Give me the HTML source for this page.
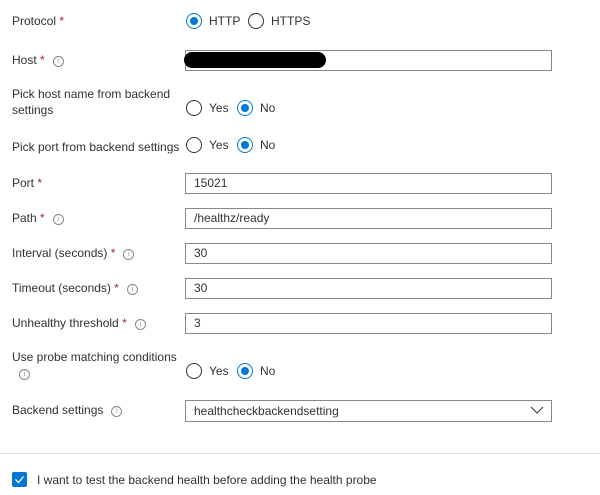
<!DOCTYPE html>
<html><head><style>
body{margin:0;width:600px;height:495px;background:#fff;font-family:"Liberation Sans",Arial,sans-serif;font-size:12px;color:#323130;position:relative;overflow:hidden}
.a{position:absolute}
.l{position:absolute;left:12px;line-height:16px}
.r{color:#a4262c}
.i{display:inline-block;width:9px;height:9px;border:1px solid #8a8886;border-radius:50%;font-size:7px;line-height:9px;text-align:center;color:#8a8886;margin-left:8px;vertical-align:1px}
.in{position:absolute;left:185px;width:365px;height:19px;border:1px solid #8a8886;line-height:19px;padding-left:8px;box-sizing:content-box}
.rb{position:absolute;width:14px;height:14px;border:1px solid #323130;border-radius:50%}
.rb.on{border-color:#0078d4}
.rb.on:after{content:"";position:absolute;left:3px;top:3px;width:8px;height:8px;border-radius:50%;background:#0078d4}
.t{position:absolute;line-height:16px}
</style></head><body>
<div class="l" style="top:13px">Protocol <span class="r">*</span></div>
<div class="rb on" style="left:186px;top:13px"></div><div class="t" style="left:209px;top:13px">HTTP</div>
<div class="rb" style="left:248px;top:13px"></div><div class="t" style="left:271px;top:13px">HTTPS</div>

<div class="l" style="top:52px">Host <span class="r">*</span><span class="i">i</span></div>
<div class="in" style="top:50px;width:357px"></div>
<div class="a" style="left:184px;top:52px;width:142px;height:16px;background:#000;border-radius:8px"></div>

<div class="l" style="top:86px">Pick host name from backend<br>settings</div>
<div class="rb" style="left:186px;top:100px"></div><div class="t" style="left:209px;top:100px">Yes</div>
<div class="rb on" style="left:237px;top:100px"></div><div class="t" style="left:260px;top:100px">No</div>

<div class="l" style="top:139px">Pick port from backend settings</div>
<div class="rb" style="left:186px;top:137px"></div><div class="t" style="left:209px;top:137px">Yes</div>
<div class="rb on" style="left:237px;top:137px"></div><div class="t" style="left:260px;top:137px">No</div>

<div class="l" style="top:175px">Port <span class="r">*</span></div>
<div class="in" style="top:173px;width:357px">15021</div>
<div class="l" style="top:210px">Path <span class="r">*</span><span class="i">i</span></div>
<div class="in" style="top:208px;width:357px">/healthz/ready</div>
<div class="l" style="top:245px">Interval (seconds) <span class="r">*</span><span class="i">i</span></div>
<div class="in" style="top:243px;width:357px">30</div>
<div class="l" style="top:280px">Timeout (seconds) <span class="r">*</span><span class="i">i</span></div>
<div class="in" style="top:278px;width:357px">30</div>
<div class="l" style="top:315px">Unhealthy threshold <span class="r">*</span><span class="i">i</span></div>
<div class="in" style="top:313px;width:357px">3</div>

<div class="l" style="top:349px">Use probe matching conditions<br><span class="i" style="margin-left:7px">i</span></div>
<div class="rb" style="left:186px;top:363px"></div><div class="t" style="left:209px;top:363px">Yes</div>
<div class="rb on" style="left:237px;top:363px"></div><div class="t" style="left:260px;top:363px">No</div>

<div class="l" style="top:402px">Backend settings<span class="i">i</span></div>
<div class="in" style="top:400px;width:357px;height:20px;line-height:20px">healthcheckbackendsetting</div>
<svg class="a" style="left:530px;top:404px" width="14" height="12"><path d="M1 3 L7 9 L13 3" fill="none" stroke="#323130" stroke-width="1"/></svg>

<div class="a" style="left:0;top:453px;width:600px;height:1px;background:#e1dfdd"></div>
<div class="a" style="left:12px;top:472px;width:15px;height:15px;background:#0078d4;border-radius:2px"></div>
<svg class="a" style="left:12px;top:472px" width="15" height="15"><path d="M3.5 7.5 L6.5 10.5 L11.5 4.5" fill="none" stroke="#fff" stroke-width="1.3"/></svg>
<div class="t" style="left:37px;top:472px">I want to test the backend health before adding the health probe</div>
</body></html>
